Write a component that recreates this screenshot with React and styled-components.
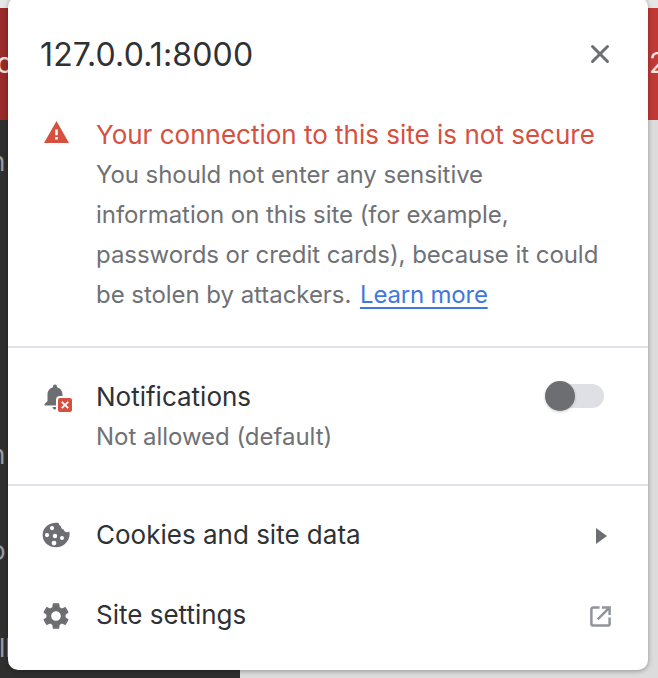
import React from "react"
import styled, { createGlobalStyle } from "styled-components"

const GlobalStyle = createGlobalStyle`
    html, body {
        margin: 0;
        padding: 0;
        background: #dcdcdc;
    }
`

const RowIcon = styled.svg`
    width: 32px;
    height: 32px;
    fill: #6c6e72;
    display: block;
`

const CookieIcon = () => (
    <RowIcon viewBox="-1 0 32 32">
        <path fillRule="evenodd" d="M15 2.7c1.2 0 2 .1 2.600.3.200 1.600 1 2.700 2.400 3.200-.1 1.800 1 3.100 2.800 3.300.3 1.700 1.500 2.700 3.200 2.700.8 0 1.700-.2 2.400-.6.100.9.200 1.700.200 2.400 0 7.200-6 13.300-13.400 13.300S1.600 22.300 1.600 15 7.600 2.700 15 2.700zM11 6a2.100 2.100 0 1 0 0 4.200A2.100 2.100 0 0 0 11 6zM6 13a2.100 2.100 0 1 0 0 4.200A2.100 2.100 0 0 0 6 13zM14 13.800a2.200 2.200 0 1 0 0 4.400 2.200 2.200 0 0 0 0-4.400zM21 16a2 2 0 1 0 0 4 2 2 0 0 0 0-4zM13 20.700a2.400 2.400 0 1 0 0 4.800 2.400 2.400 0 0 0 0-4.800z" />
    </RowIcon>
)

const GearIcon = () => (
    <RowIcon viewBox="0 0 24 24">
        <path d="M19.140 12.940c.04-.3.060-.61.060-.94 0-.32-.02-.64-.07-.94l2.030-1.580a.49.49 0 0 0 .12-.61l-1.920-3.320a.488.488 0 0 0-.59-.22l-2.390.96c-.5-.38-1.030-.7-1.620-.94l-.36-2.540a.484.484 0 0 0-.48-.41h-3.840c-.24 0-.43.17-.47.41l-.36 2.540c-.59.24-1.130.57-1.620.94l-2.390-.96c-.22-.08-.47 0-.59.22L2.740 8.870c-.12.21-.08.47.12.61l2.030 1.580c-.05.3-.09.63-.09.94s.02.640.07.940l-2.030 1.580a.49.49 0 0 0-.12.61l1.920 3.320c.12.22.37.29.59.22l2.390-.96c.5.38 1.030.7 1.620.94l.36 2.540c.05.24.24.41.48.41h3.840c.24 0 .44-.17.47-.41l.36-2.540c.59-.24 1.130-.56 1.620-.94l2.390.96c.22.08.47 0 .59-.22l1.920-3.320c.12-.22.070-.47-.12-.61l-2.010-1.580zM12 15.600c-1.980 0-3.600-1.620-3.600-3.600s1.620-3.600 3.600-3.600 3.600 1.620 3.600 3.600-1.620 3.600-3.600 3.600z" />
    </RowIcon>
)

const BellIcon = () => (
    <BellWrap>
        <RowIcon viewBox="0 0 32 32">
            <path d="M15 2.500c-1.200 0-2 .9-2 2v.8c-3.400.9-5.500 3.800-5.500 7.400v6.300L4.500 22v1.500h21V22l-3-3v-6.300c0-3.600-2.100-6.500-5.500-7.400v-.8c0-1.100-.8-2-2-2zM12.500 25c0 1.400 1.100 2.500 2.500 2.500s2.500-1.100 2.500-2.500z" />
        </RowIcon>
        <BellBadge>
            <svg viewBox="0 0 14 14" width="10" height="10">
                <path d="M2.500 2.500l9 9M11.500 2.500l-9 9" stroke="#fff" strokeWidth="2.400" fill="none" />
            </svg>
        </BellBadge>
    </BellWrap>
)

export default function App() {
    return (
        <Page>
            <GlobalStyle />
            <Backdrop>
                <BrowserStrip />
                <RedBar>
                    <BarText>ec</BarText>
                    <BarText>2</BarText>
                </RedBar>
                <Lower>
                    <Sidebar>
                        <SideLabel $top={27}>n</SideLabel>
                        <SideLabel $top={263}>n</SideLabel>
                        <SideLabel $top={66}>o</SideLabel>
                        <SideLabel $top={67} $left={-1}>ll</SideLabel>
                    </Sidebar>
                </Lower>
            </Backdrop>

            <Popup>
                <Header>
                    <Title>127.0.0.1:8000</Title>
                    <CloseButton viewBox="0 0 24 24">
                        <path d="M4.500 4.500l15 15M19.500 4.500l-15 15" />
                    </CloseButton>
                </Header>

                <WarningRow>
                    <IconSlot>
                        <WarningIcon viewBox="0 0 24 21">
                            <path d="M0 21h24L12 0 0 21zm13.200-3.300h-2.400v-2.400h2.400v2.400zm0-4.200h-2.400V8h2.400v5.500z" />
                        </WarningIcon>
                    </IconSlot>
                    <div>
                        <WarningTitle>Your connection to this site is not secure</WarningTitle>
                        <Body>
                            You should not enter any sensitive information on this site (for example, passwords or credit cards), because it could be stolen by attackers. <LearnMore href="#">Learn more</LearnMore>
                        </Body>
                    </div>
                </WarningRow>

                <Divider />

                <NotificationRow>
                    <IconSlot><BellIcon /></IconSlot>
                    <NotificationText>
                        <RowLabel>Notifications</RowLabel>
                        <SubLabel>Not allowed (default)</SubLabel>
                    </NotificationText>
                    <Toggle><Knob /></Toggle>
                </NotificationRow>

                <Divider />

                <LinkList>
                    <LinkRow>
                        <IconSlot><CookieIcon /></IconSlot>
                        <RowLabel>Cookies and site data</RowLabel>
                        <Caret viewBox="0 0 11 16">
                            <path d="M0 0l11 8-11 8z" />
                        </Caret>
                    </LinkRow>
                    <LinkRow>
                        <IconSlot><GearIcon /></IconSlot>
                        <RowLabel>Site settings</RowLabel>
                        <Launch viewBox="0 0 24 24">
                            <path d="M11 2.500H4.500a2 2 0 0 0-2 2v15a2 2 0 0 0 2 2h15a2 2 0 0 0 2-2V13" fill="none" />
                            <path d="M9 15L20 4M13.500 2.500h8v8" fill="none" />
                        </Launch>
                    </LinkRow>
                </LinkList>
            </Popup>
        </Page>
    )
}

const Page = styled.div`
    position: relative;
    width: 658px;
    height: 678px;
    overflow: hidden;
    font-family: Inter, "Liberation Sans", sans-serif;
`

const Backdrop = styled.div`
    display: flex;
    flex-direction: column;
    height: 100%;
`

const BrowserStrip = styled.div`
    height: 8px;
    background: #e6e6e6;
`

const RedBar = styled.div`
    height: 112px;
    display: flex;
    justify-content: space-between;
    align-items: center;
    background: linear-gradient(90deg, #982c2a 0, #c13a35 100%);
    color: #f4e2e0;
    font-size: 28px;
    margin-left: -20px;
    margin-right: -8px;
    padding-bottom: 2px;
    box-sizing: border-box;
`

const BarText = styled.span`
    display: block;
`

const Lower = styled.div`
    flex: 1;
    display: flex;
    background: #dcdcdc;
`

const Sidebar = styled.div`
    width: 240px;
    background: #2f2f2f;
    color: #9b9b9b;
    display: flex;
    flex-direction: column;
    align-items: flex-start;
    font-size: 26px;
    line-height: 30px;
`

const SideLabel = styled.span`
    margin-top: ${p => p.$top}px;
    margin-left: ${p => p.$left ?? -10}px;
`

const Popup = styled.div`
    position: absolute;
    top: -3px;
    left: 8px;
    width: 640px;
    height: 673px;
    box-sizing: border-box;
    background: #fff;
    border-radius: 10px;
    box-shadow: 0 1px 5px rgba(0, 0, 0, 0.35);
    display: flex;
    flex-direction: column;
`

const Header = styled.div`
    display: flex;
    flex: none;
    justify-content: space-between;
    align-items: center;
    padding: 38px 36px 0 32px;
    height: 38px;
`

const Title = styled.div`
    font-size: 32px;
    color: #303134;
    letter-spacing: 0.14px;
`

const CloseButton = styled.svg`
    width: 24px;
    height: 24px;
    stroke: #6c6e72;
    stroke-width: 3;
    stroke-linecap: round;
    fill: none;
`

const WarningRow = styled.div`
    display: flex;
    flex: none;
    padding: 43px 40px 0 0;
`

const IconSlot = styled.div`
    width: 88px;
    flex: none;
    display: flex;
    justify-content: center;
    padding-left: 8px;
    box-sizing: border-box;
`

const WarningIcon = styled.svg`
    width: 25px;
    height: 22px;
    fill: #d6503f;
    margin-top: 5px;
`

const WarningTitle = styled.div`
    font-size: 26px;
    line-height: 37px;
    padding-bottom: 2px;
    color: #d6503f;
    white-space: nowrap;
`

const Body = styled.div`
    font-size: 24px;
    line-height: 40px;
    letter-spacing: -0.05px;
    color: #6f7175;
`

const LearnMore = styled.a`
    color: #3f79de;
    margin-left: 2px;
    letter-spacing: -0.2px;
    text-decoration: underline;
    text-underline-offset: 4px;
    text-decoration-thickness: 2px;
`

const Divider = styled.div`
    height: 2px;
    background: #e2e2e8;
    margin-top: 31px;
    flex: none;
`

const NotificationRow = styled.div`
    display: flex;
    flex: none;
    align-items: flex-start;
    padding: 30px 44px 0 0;
    height: 75px;
`

const BellWrap = styled.div`
    position: relative;
    width: 32px;
    height: 32px;
    margin-top: 4px;
`

const BellBadge = styled.div`
    position: absolute;
    right: -2px;
    bottom: 0;
    width: 14px;
    height: 14px;
    display: flex;
    align-items: center;
    justify-content: center;
    border-radius: 4px;
    background: #d6503f;
    border: 2px solid #fff;
`

const NotificationText = styled.div`
    flex: 1;
`

const RowLabel = styled.div`
    flex: 1;
    font-size: 26px;
    line-height: 38px;
    padding-bottom: 2px;
    color: #303134;
`

const SubLabel = styled.div`
    font-size: 24px;
    line-height: 38px;
    letter-spacing: -0.03px;
    color: #6f7175;
`

const Toggle = styled.div`
    position: relative;
    width: 54px;
    height: 24px;
    margin-top: 6px;
    border-radius: 12px;
    background: #dfe0e5;
`

const Knob = styled.div`
    position: absolute;
    left: -5px;
    top: -3px;
    width: 30px;
    height: 30px;
    border-radius: 50%;
    background: #6c6e72;
    box-shadow: 0 1px 3px rgba(0, 0, 0, 0.2);
`

const LinkList = styled.div`
    display: flex;
    flex-direction: column;
    padding-top: 10px;
`

const LinkRow = styled.div`
    height: 80px;
    display: flex;
    align-items: center;
    padding-right: 36px;
`

const Caret = styled.svg`
    width: 11px;
    height: 16px;
    fill: #6c6e72;
    margin-right: 5px;
`

const Launch = styled.svg`
    width: 23px;
    height: 23px;
    stroke: #90959b;
    stroke-width: 2.600;
`
